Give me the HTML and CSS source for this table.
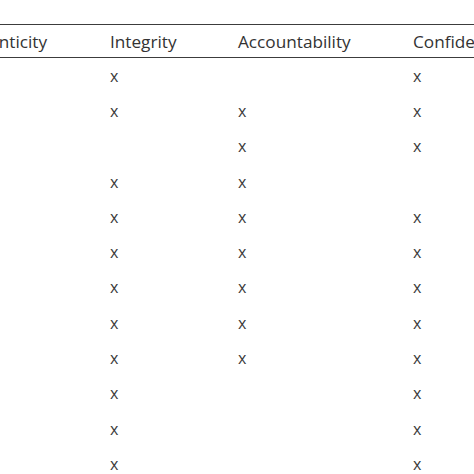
FILE: index.html
```html
<!DOCTYPE html>
<html>
<head>
<meta charset="utf-8">
<link rel="stylesheet" href="styles.css">
</head>
<body>
<div class="wrap">
<table class="grid">
<thead>
<tr><th class="c1">Authenticity</th><th class="c2">Integrity</th><th class="c3">Accountability</th><th class="c4">Confidentiality</th></tr>
</thead>
<tbody>
<tr><td></td><td>x</td><td></td><td>x</td></tr>
<tr><td></td><td>x</td><td>x</td><td>x</td></tr>
<tr><td></td><td></td><td>x</td><td>x</td></tr>
<tr><td></td><td>x</td><td>x</td><td></td></tr>
<tr><td></td><td>x</td><td>x</td><td>x</td></tr>
<tr><td></td><td>x</td><td>x</td><td>x</td></tr>
<tr><td></td><td>x</td><td>x</td><td>x</td></tr>
<tr><td></td><td>x</td><td>x</td><td>x</td></tr>
<tr><td></td><td>x</td><td>x</td><td>x</td></tr>
<tr><td></td><td>x</td><td></td><td>x</td></tr>
<tr><td></td><td>x</td><td></td><td>x</td></tr>
<tr><td></td><td>x</td><td></td><td>x</td></tr>
</tbody>
</table>
</div>
</body>
</html>
```
FILE: styles.css
```css
html, body {
  margin: 0;
  padding: 0;
  background: #ffffff;
  overflow: hidden;
}
.wrap {
  width: 474px;
  height: 474px;
  overflow: hidden;
  padding-top: 24px;
  box-sizing: border-box;
}
.grid {
  margin-left: -49px;
  border-collapse: collapse;
  table-layout: fixed;
  width: 720px;
  font-family: "Open Sans", "Liberation Sans", sans-serif;
  font-size: 17.2px;
  color: #333333;
}
.grid th {
  font-weight: normal;
  text-align: left;
  padding: 0;
  height: 32px;
  white-space: nowrap;
  border-top: 1px solid #3c3c3c;
  border-bottom: 1px solid #3c3c3c;
  vertical-align: middle;
}
.grid td {
  padding: 0;
  height: 35.3px;
  vertical-align: middle;
  text-align: left;
  line-height: 16px;
  font-size: 16px;
  color: #3a3a3a;
}
.c1 { width: 159px; }
.c2 { width: 128px; }
.c3 { width: 175px; }
.c4 { width: 258px; }
```
